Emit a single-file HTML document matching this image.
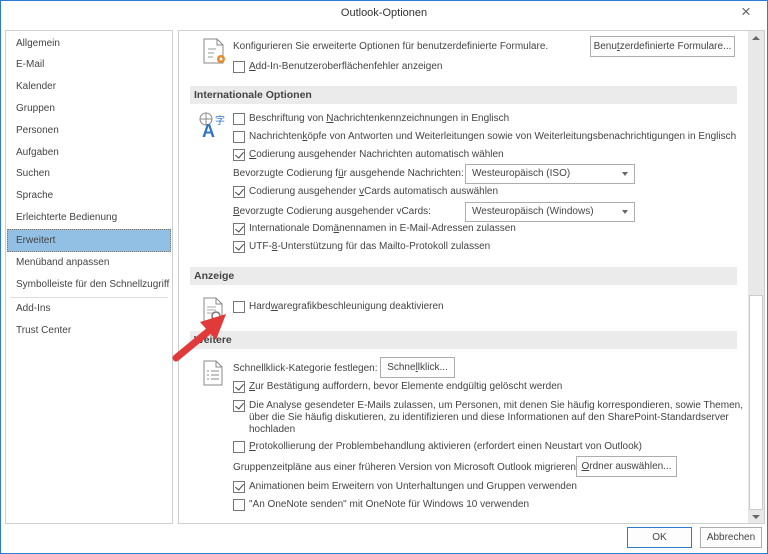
<!DOCTYPE html>
<html><head><meta charset="utf-8">
<style>
*{margin:0;padding:0;box-sizing:border-box}
body{width:768px;height:554px;background:#fff;font-family:"Liberation Sans",sans-serif;font-size:10px;color:#444;position:relative;overflow:hidden}
.frame{position:absolute;left:0;top:0;width:768px;height:554px;border:1px solid #2b7bd0;background:#fff}
.a{position:absolute;white-space:nowrap}
.nav{position:absolute;left:5px;top:30px;width:168px;height:494px;border:1px solid #cfcfcf}
.ni{position:absolute;left:10px}
.main{position:absolute;left:178px;top:30px;width:587px;height:494px;border:1px solid #cfcfcf}
.hd{position:absolute;left:190px;width:547px;height:18px;background:#ebebeb;font-weight:bold;padding:3px 0 0 4px;color:#444;font-size:10.5px}
.cb{position:absolute;width:12px;height:12px;border:1px solid #777;background:#fff}
.cb.k::after{content:"";position:absolute;left:3px;top:0px;width:4px;height:7px;border:solid #444;border-width:0 1.5px 1.5px 0;transform:rotate(40deg)}
.btn{position:absolute;border:1px solid #adadad;background:#fdfdfd;height:21px;text-align:center;line-height:19px;white-space:nowrap}
.sel{position:absolute;border:1px solid #adadad;background:#fff;height:20px;padding-left:6px;line-height:18px}
.sel::after{content:"";position:absolute;right:6px;top:7px;border:3px solid transparent;border-top:4px solid #666}
u{text-decoration:underline}
</style></head><body>
<div class="frame"></div>
<div class="a" style="left:0;width:768px;top:7px;text-align:center;color:#333;font-size:11px">Outlook-Optionen</div>
<div class="a" style="left:741px;top:2px;font-size:17px;color:#666">×</div>

<div class="nav">
<div class="ni a" style="top:7px">Allgemein</div>
<div class="ni a" style="top:28px">E-Mail</div>
<div class="ni a" style="top:50px">Kalender</div>
<div class="ni a" style="top:72px">Gruppen</div>
<div class="ni a" style="top:94px">Personen</div>
<div class="ni a" style="top:116px">Aufgaben</div>
<div class="ni a" style="top:137px">Suchen</div>
<div class="ni a" style="top:159px">Sprache</div>
<div class="ni a" style="top:181px">Erleichterte Bedienung</div>
<div class="a" style="left:1px;top:198px;width:164px;height:23px;background:#92c0e4;border:1px dotted #777"></div>
<div class="ni a" style="top:204px">Erweitert</div>
<div class="ni a" style="top:226px">Menüband anpassen</div>
<div class="ni a" style="top:248px">Symbolleiste für den Schnellzugriff</div>
<div class="a" style="left:4px;top:266px;width:158px;height:1px;background:#ddd"></div>
<div class="ni a" style="top:272px">Add-Ins</div>
<div class="ni a" style="top:294px">Trust Center</div>
</div>

<div class="main"></div>
<div class="a" style="left:748px;top:31px;width:16px;height:492px;background:#e8e8e8"></div>
<div class="a" style="left:752px;top:36px;border:4px solid transparent;border-bottom:4px solid #666;border-top:0"></div>
<div class="a" style="left:752px;top:515px;border:4px solid transparent;border-top:4px solid #666;border-bottom:0"></div>
<div class="a" style="left:749px;top:295px;width:14px;height:215px;background:#fff;border:1px solid #ccc"></div>

<svg class="a" style="left:202px;top:37px" width="26" height="30"><path d="M2 2h13l6 6v18H2z" fill="#fff" stroke="#888"/><path d="M15 2v6h6" fill="none" stroke="#888"/><path d="M6 12h8M6 16h6M6 20h5" stroke="#999"/><circle cx="19" cy="22" r="4" fill="#e8882b"/><circle cx="19" cy="22" r="1.5" fill="#fff"/></svg>
<div class="a" style="left:233px;top:41px">Konfigurieren Sie erweiterte Optionen für benutzerdefinierte Formulare.</div>
<div class="btn" style="left:590px;top:36px;width:145px">Benu<u>t</u>zerdefinierte Formulare...</div>
<div class="cb" style="left:233px;top:61px"></div><div class="a" style="left:249px;top:61px"><u>A</u>dd-In-Benutzeroberflächenfehler anzeigen</div>

<div class="hd" style="top:86px">Internationale Optionen</div>
<svg class="a" style="left:198px;top:111px" width="30" height="28"><circle cx="8" cy="8" r="6" fill="none" stroke="#888"/><path d="M2 8h12M8 2v12" stroke="#888"/><text x="4" y="26" font-family="Liberation Sans" font-size="18" font-weight="bold" fill="#2e75c6">A</text><text x="17" y="13" font-family="Noto Sans CJK SC" font-size="10" fill="#2e75c6">字</text></svg>
<div class="cb" style="left:233px;top:113px"></div><div class="a" style="left:249px;top:113px">Beschriftung von <u>N</u>achrichtenkennzeichnungen in Englisch</div>
<div class="cb" style="left:233px;top:131px"></div><div class="a" style="left:249px;top:131px">Nachrichten<u>k</u>öpfe von Antworten und Weiterleitungen sowie von Weiterleitungsbenachrichtigungen in Englisch</div>
<div class="cb k" style="left:233px;top:149px"></div><div class="a" style="left:249px;top:149px"><u>C</u>odierung ausgehender Nachrichten automatisch wählen</div>
<div class="a" style="left:233px;top:168px">Bevorzugte Codierung f<u>ü</u>r ausgehende Nachrichten:</div>
<div class="sel" style="left:465px;top:164px;width:170px">Westeuropäisch (ISO)</div>
<div class="cb k" style="left:233px;top:186px"></div><div class="a" style="left:249px;top:186px">Codierung ausgehender <u>v</u>Cards automatisch auswählen</div>
<div class="a" style="left:233px;top:206px"><u>B</u>evorzugte Codierung ausgehender vCards:</div>
<div class="sel" style="left:465px;top:202px;width:170px">Westeuropäisch (Windows)</div>
<div class="cb k" style="left:233px;top:223px"></div><div class="a" style="left:249px;top:223px">Internationale Dom<u>ä</u>nennamen in E-Mail-Adressen zulassen</div>
<div class="cb k" style="left:233px;top:241px"></div><div class="a" style="left:249px;top:241px">UTF-<u>8</u>-Unterstützung für das Mailto-Protokoll zulassen</div>

<div class="hd" style="top:267px">Anzeige</div>
<svg class="a" style="left:202px;top:296px" width="26" height="30"><path d="M2 2h12l6 6v18H2z" fill="#fff" stroke="#888"/><path d="M14 2v6h6" fill="none" stroke="#888"/><path d="M5 11h9M5 14h9M5 17h6" stroke="#aaa"/><circle cx="14" cy="20" r="4" fill="#fff" stroke="#777" stroke-width="1.5"/><path d="M17 23l3 3" stroke="#777" stroke-width="2"/></svg>
<div class="cb" style="left:233px;top:301px"></div><div class="a" style="left:249px;top:301px">Hard<u>w</u>aregrafikbeschleunigung deaktivieren</div>

<div class="hd" style="top:331px">Weitere</div>
<svg class="a" style="left:202px;top:359px" width="24" height="30"><path d="M2 2h12l6 6v18H2z" fill="#fff" stroke="#888"/><path d="M14 2v6h6" fill="none" stroke="#888"/><path d="M5 12h2M9 12h8M5 16h2M9 16h8M5 20h2M9 20h8" stroke="#888"/></svg>
<div class="a" style="left:233px;top:363px">Schnellklick-Kategorie festlegen:</div>
<div class="btn" style="left:380px;top:357px;width:75px">Schne<u>l</u>lklick...</div>
<div class="cb k" style="left:233px;top:381px"></div><div class="a" style="left:249px;top:381px"><u>Z</u>ur Bestätigung auffordern, bevor Elemente endgültig gelöscht werden</div>
<div class="cb k" style="left:233px;top:400px"></div><div class="a" style="left:249px;top:400px;line-height:12px">Die Analyse gesendeter E-Mails zulassen, um Personen, mit denen Sie häufig korrespondieren, sowie Themen,<br>über die Sie häufig diskutieren, zu identifizieren und diese Informationen auf den SharePoint-Standardserver<br>hochladen</div>
<div class="cb" style="left:233px;top:441px"></div><div class="a" style="left:249px;top:441px"><u>P</u>rotokollierung der Problembehandlung aktivieren (erfordert einen Neustart von Outlook)</div>
<div class="a" style="left:233px;top:462px">Gruppenzeitpläne aus einer früheren Version von Microsoft Outlook migrieren:</div>
<div class="btn" style="left:576px;top:456px;width:101px"><u>O</u>rdner auswählen...</div>
<div class="cb k" style="left:233px;top:481px"></div><div class="a" style="left:249px;top:481px">Animationen beim Erweitern von Unterhaltungen und Gruppen verwenden</div>
<div class="cb" style="left:233px;top:499px"></div><div class="a" style="left:249px;top:499px">"An OneNote senden" mit OneNote für Windows 10 verwenden</div>

<svg class="a" style="left:170px;top:310px" width="62" height="56"><path d="M6 48L40 20" stroke="#e03a3a" stroke-width="7" stroke-linecap="round"/><path d="M56 4L30 12L46 30z" fill="#e03a3a"/></svg>

<div class="btn" style="left:627px;top:527px;width:65px;border-color:#2b7bd0">OK</div>
<div class="btn" style="left:700px;top:527px;width:62px">Abbrechen</div>
</body></html>
